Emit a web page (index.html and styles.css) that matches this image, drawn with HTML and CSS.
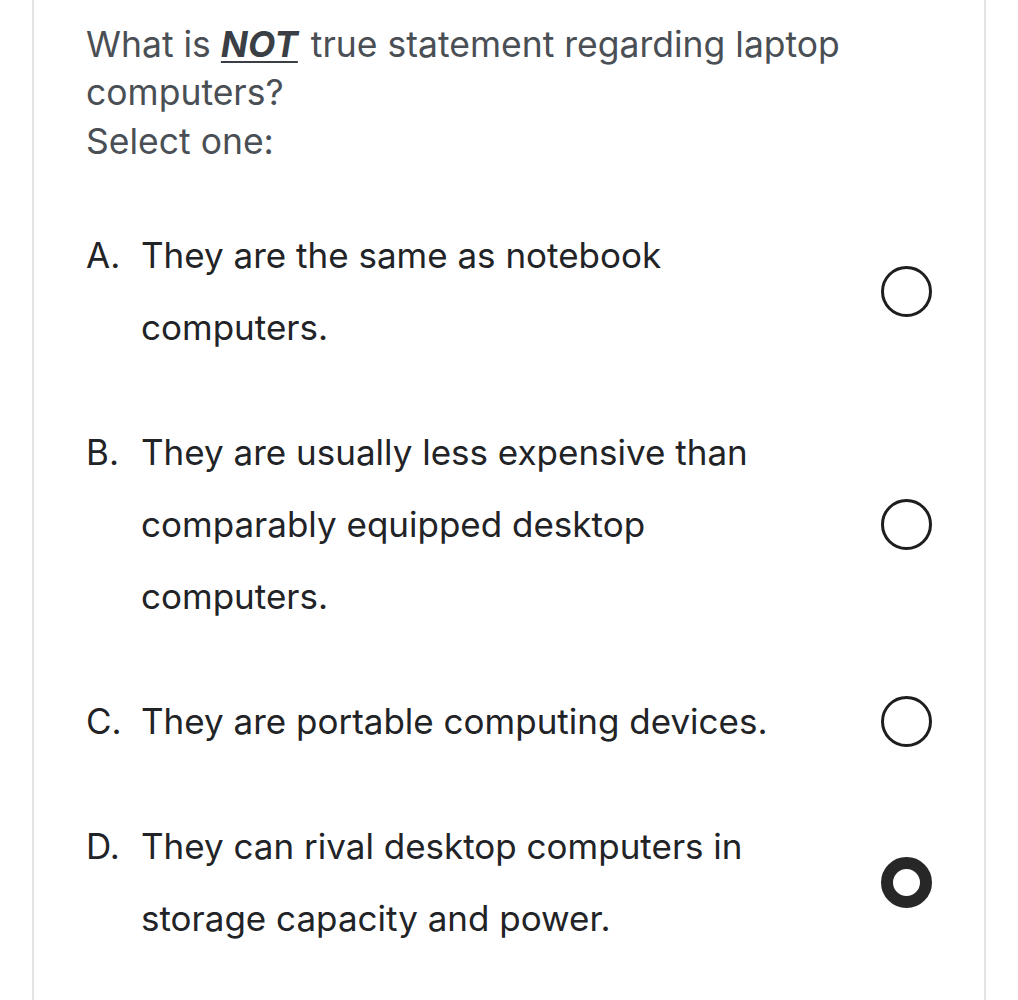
FILE: index.html
```html
<!DOCTYPE html>
<html>
<head>
<meta charset="utf-8">
<link rel="stylesheet" href="styles.css">
</head>
<body>
<div class="card">
  <div class="qtext">What is <span class="not">NOT</span> true statement regarding laptop computers?</div>
  <div class="prompt">Select one:</div>
  <div class="answers">
    <div class="option">
      <div class="label"><span class="letter">A.</span><span class="text">They are the same as notebook computers.</span></div>
      <span class="radio"></span>
    </div>
    <div class="option">
      <div class="label"><span class="letter">B.</span><span class="text">They are usually less expensive than comparably equipped desktop computers.</span></div>
      <span class="radio"></span>
    </div>
    <div class="option">
      <div class="label"><span class="letter">C.</span><span class="text">They are portable computing devices.</span></div>
      <span class="radio"></span>
    </div>
    <div class="option">
      <div class="label"><span class="letter">D.</span><span class="text">They can rival desktop computers in storage capacity and power.</span></div>
      <span class="radio checked"></span>
    </div>
  </div>
</div>
</body>
</html>
```

FILE: styles.css
```css
html, body {
  margin: 0;
  padding: 0;
  background: #ffffff;
}
body {
  font-family: Inter, "Liberation Sans", Arial, sans-serif;
}
.card {
  margin: 0 32px;
  min-height: 1000px;
  box-sizing: border-box;
  border-left: 2px solid #e4e4e4;
  border-right: 2px solid #e4e4e4;
  padding: 21px 52px 0 52px;
}
.qtext {
  font-size: 35.5px;
  line-height: 48px;
  color: #4a4f55;
  max-width: 790px;
}
.not {
  display: inline-block;
  padding-right: 3px;
  font-weight: bold;
  font-style: italic;
  text-decoration: underline;
  text-decoration-thickness: 2px;
  text-underline-offset: 4px;
  color: #3a3f46;
}
.prompt {
  font-size: 35.5px;
  line-height: 50px;
  color: #4a4f55;
}
.answers {
  margin-top: 52px;
  display: flex;
  flex-direction: column;
  gap: 53px;
}
.option {
  display: flex;
  align-items: center;
  justify-content: space-between;
}
.label {
  display: flex;
  font-size: 35px;
  line-height: 72px;
  color: #222326;
}
.letter {
  width: 55px;
  flex: none;
}
.text {
  max-width: 660px;
}
.radio {
  flex: none;
  width: 51px;
  height: 51px;
  box-sizing: border-box;
  border: 3px solid #1e1e1e;
  border-radius: 50%;
}
.radio.checked {
  border-width: 12px;
  border-color: #272727;
}
```
